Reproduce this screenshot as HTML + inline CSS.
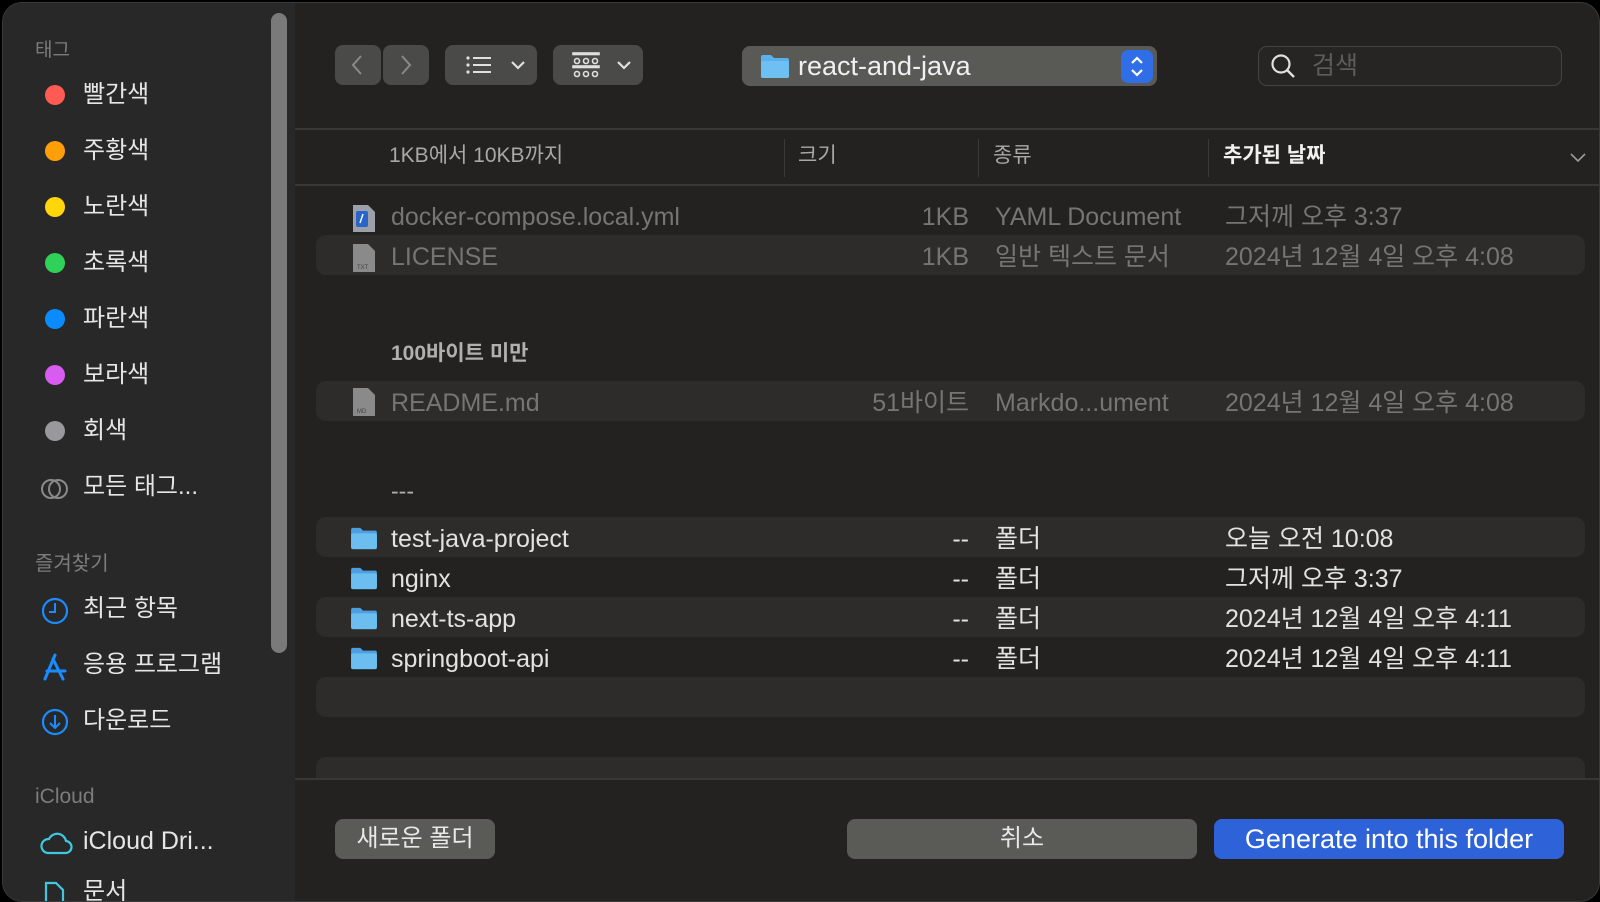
<!DOCTYPE html>
<html><head><meta charset="utf-8"><style>
*{margin:0;padding:0;box-sizing:border-box}
body{width:1600px;height:896px;background:#000;overflow:hidden;font-family:"Liberation Sans","Noto Sans CJK KR",sans-serif;position:relative}
.win{position:absolute;left:2px;top:2px;width:1598px;height:900px;background:#232220;border-radius:20px;overflow:hidden;border:1px solid #3a3a3a}
.side{position:absolute;left:0;top:0;width:292px;height:900px;background:#282828}
.abs{position:absolute;white-space:nowrap;line-height:28px}
.sl{color:#7c7c7c;font-size:20px}
.si{color:#e6e6e6;font-size:24px;left:80px}
.dot{position:absolute;left:42px;width:20px;height:20px;border-radius:50%}
.scroll{position:absolute;left:268px;top:10px;width:16px;height:640px;border-radius:8px;background:#7a7a7a}
.btn{position:absolute;background:#5a5a57;border-radius:8px}
.band{position:absolute;left:313px;width:1269px;height:40px;background:#2d2c2a;border-radius:10px}
.dim{color:#767573;font-size:25px}
.txt{color:#e2e2e2;font-size:25px}
.hd{color:#a8a8a8;font-size:21px}
.folder{position:absolute;left:346px;width:30px;height:24px}
</style></head><body>
<div class="win">
<div class="side">
<div class="abs sl" style="left:32px;top:34px;font-size:19px">태그</div>
<div class="dot" style="top:82px;background:#fe5b52"></div><div class="abs si" style="top:78px">빨간색</div>
<div class="dot" style="top:138px;background:#fe9f0a"></div><div class="abs si" style="top:134px">주황색</div>
<div class="dot" style="top:194px;background:#fed60a"></div><div class="abs si" style="top:190px">노란색</div>
<div class="dot" style="top:250px;background:#30d158"></div><div class="abs si" style="top:246px">초록색</div>
<div class="dot" style="top:306px;background:#0a8cff"></div><div class="abs si" style="top:302px">파란색</div>
<div class="dot" style="top:362px;background:#d85cf0"></div><div class="abs si" style="top:358px">보라색</div>
<div class="dot" style="top:418px;background:#98989d"></div><div class="abs si" style="top:414px">회색</div>
<svg class="abs" style="left:38px;top:474px" width="30" height="24"><circle cx="10" cy="12" r="9" fill="none" stroke="#8a8a8a" stroke-width="2"/><circle cx="17" cy="12" r="9" fill="none" stroke="#8a8a8a" stroke-width="2"/></svg>
<div class="abs si" style="top:470px">모든 태그...</div>
<div class="abs sl" style="left:32px;top:547px">즐겨찾기</div>
<svg class="abs" style="left:38px;top:594px" width="28" height="28"><circle cx="14" cy="14" r="12" fill="none" stroke="#1a8cff" stroke-width="2.2"/><path d="M14 6v9h-6" fill="none" stroke="#1a8cff" stroke-width="2"/></svg>
<div class="abs si" style="top:592px">최근 항목</div>
<svg class="abs" style="left:38px;top:650px" width="30" height="28"><path d="M14 2l-10 24M12 6l10 20M6 18h18" fill="none" stroke="#1a8cff" stroke-width="3" stroke-linecap="round"/></svg>
<div class="abs si" style="top:648px">응용 프로그램</div>
<svg class="abs" style="left:38px;top:705px" width="28" height="28"><circle cx="14" cy="14" r="12" fill="none" stroke="#1a8cff" stroke-width="2.2"/><path d="M14 7v13M9 15l5 5 5-5" fill="none" stroke="#1a8cff" stroke-width="2"/></svg>
<div class="abs si" style="top:704px">다운로드</div>
<div class="abs sl" style="left:32px;top:780px;font-size:21px">iCloud</div>
<svg class="abs" style="left:36px;top:826px" width="34" height="28"><path d="M9 24h17a6 6 0 0 0 1-12 9 9 0 0 0-17-2 7 7 0 0 0-1 14z" fill="none" stroke="#40c8e0" stroke-width="2.2"/></svg>
<div class="abs si" style="top:824px;font-size:25px">iCloud Dri...</div>
<svg class="abs" style="left:40px;top:878px" width="24" height="24"><path d="M3 2h10l7 7v15H3z" fill="none" stroke="#40c8e0" stroke-width="2.2"/></svg>
<div class="abs si" style="top:875px">문서</div>
<div class="scroll"></div>
</div>

<!-- toolbar -->
<div class="btn" style="left:332px;top:42px;width:46px;height:40px;background:#4a4a48"></div>
<div class="btn" style="left:380px;top:42px;width:46px;height:40px;background:#4a4a48"></div>
<svg class="abs" style="left:345px;top:50px" width="20" height="24"><path d="M13 3l-8 9 8 9" fill="none" stroke="#8a8a88" stroke-width="2"/></svg>
<svg class="abs" style="left:393px;top:50px" width="20" height="24"><path d="M6 3l8 9-8 9" fill="none" stroke="#8a8a88" stroke-width="2"/></svg>
<div class="btn" style="left:442px;top:42px;width:92px;height:40px;background:#4a4a48"></div>
<svg class="abs" style="left:462px;top:50px" width="30" height="24"><g fill="#e0e0e0"><circle cx="3" cy="5" r="1.6"/><circle cx="3" cy="12" r="1.6"/><circle cx="3" cy="19" r="1.6"/><rect x="8" y="4" width="18" height="2"/><rect x="8" y="11" width="18" height="2"/><rect x="8" y="18" width="18" height="2"/></g></svg>
<svg class="abs" style="left:507px;top:56px" width="16" height="12"><path d="M2 3l6 6 6-6" fill="none" stroke="#e0e0e0" stroke-width="2.2"/></svg>
<div class="btn" style="left:550px;top:42px;width:90px;height:40px;background:#4a4a48"></div>
<svg class="abs" style="left:568px;top:48px" width="30" height="30"><g fill="none" stroke="#e0e0e0" stroke-width="1.6"><rect x="2" y="2" width="26" height="1.5" fill="#e0e0e0"/><circle cx="6" cy="10" r="2.5"/><circle cx="15" cy="10" r="2.5"/><circle cx="24" cy="10" r="2.5"/><rect x="2" y="15" width="26" height="1.5" fill="#e0e0e0"/><circle cx="6" cy="23" r="2.5"/><circle cx="15" cy="23" r="2.5"/><circle cx="24" cy="23" r="2.5"/></g></svg>
<svg class="abs" style="left:613px;top:56px" width="16" height="12"><path d="M2 3l6 6 6-6" fill="none" stroke="#e0e0e0" stroke-width="2.2"/></svg>
<div class="btn" style="left:739px;top:43px;width:415px;height:40px;background:#595956"></div>
<svg class="abs" style="left:757px;top:50px" width="30" height="26"><path d="M1 4a2 2 0 0 1 2-2h8l3 3h13a2 2 0 0 1 2 2v16a2 2 0 0 1-2 2H3a2 2 0 0 1-2-2z" fill="#5ab0e8"/><rect x="1" y="8" width="28" height="17" rx="2" fill="#6fc0f2"/></svg>
<div class="abs" style="left:795px;top:49px;font-size:27px;color:#f0f0f0">react-and-java</div>
<div class="abs" style="left:1118px;top:47px;width:32px;height:33px;background:#2f6ee6;border-radius:7px"></div>
<svg class="abs" style="left:1124px;top:50px" width="20" height="28"><path d="M5 10l5-5 5 5M5 17l5 5 5-5" fill="none" stroke="#fff" stroke-width="2.2"/></svg>
<div class="abs" style="left:1255px;top:43px;width:304px;height:40px;border:1px solid #444;border-radius:9px;background:#262523"></div>
<svg class="abs" style="left:1267px;top:50px" width="28" height="28"><circle cx="11" cy="11" r="8.5" fill="none" stroke="#e0e0e0" stroke-width="2.2"/><path d="M17 17l7 7" stroke="#e0e0e0" stroke-width="2.4"/></svg>
<div class="abs" style="left:1309px;top:49px;font-size:25px;color:#5c5c5a">검색</div>

<!-- header -->
<div class="abs" style="left:292px;top:125px;width:1306px;height:2px;background:#383735"></div>
<div class="abs" style="left:292px;top:181px;width:1306px;height:2px;background:#383735"></div>
<div class="abs" style="left:781px;top:136px;width:1px;height:38px;background:#3a3937"></div>
<div class="abs" style="left:975px;top:136px;width:1px;height:38px;background:#3a3937"></div>
<div class="abs" style="left:1205px;top:136px;width:1px;height:38px;background:#3a3937"></div>
<div class="abs hd" style="left:386px;top:139px">1KB에서 10KB까지</div>
<div class="abs hd" style="left:795px;top:139px">크기</div>
<div class="abs hd" style="left:990px;top:139px">종류</div>
<div class="abs" style="left:1220px;top:139px;font-size:21px;color:#f0f0f0;font-weight:bold">추가된 날짜</div>
<svg class="abs" style="left:1566px;top:148px" width="18" height="12"><path d="M2 3l7 7 7-7" fill="none" stroke="#9a9a9a" stroke-width="1.6"/></svg>

<!-- rows -->
<div class="band" style="top:232px"></div>
<div class="band" style="top:378px"></div>
<div class="band" style="top:514px"></div>
<div class="band" style="top:594px"></div>
<div class="band" style="top:674px"></div>
<div class="band" style="top:754px"></div>

<svg class="abs" style="left:349px;top:200px" width="24" height="30"><path d="M1 2h15l7 7v20H1z" fill="#9ca0a8"/><rect x="4" y="8" width="12" height="16" rx="2" fill="#2a64c8"/><path d="M11 11l-3 9" stroke="#fff" stroke-width="1.4"/></svg>
<div class="abs dim" style="left:388px;top:200px">docker-compose.local.yml</div>
<div class="abs dim" style="left:880px;top:200px;width:86px;text-align:right">1KB</div>
<div class="abs dim" style="left:992px;top:200px">YAML Document</div>
<div class="abs dim" style="left:1222px;top:200px">그저께 오후 3:37</div>

<svg class="abs" style="left:349px;top:240px" width="24" height="30"><path d="M1 1h15l7 7v21H1z" fill="#8a8a8a"/><text x="5" y="26" font-size="6" fill="#444" font-family="Liberation Sans">TXT</text></svg>
<div class="abs dim" style="left:388px;top:240px">LICENSE</div>
<div class="abs dim" style="left:880px;top:240px;width:86px;text-align:right">1KB</div>
<div class="abs dim" style="left:992px;top:240px">일반 텍스트 문서</div>
<div class="abs dim" style="left:1222px;top:240px">2024년 12월 4일 오후 4:08</div>

<div class="abs" style="left:388px;top:337px;font-size:21px;color:#b0b0b0;font-weight:bold">100바이트 미만</div>

<svg class="abs" style="left:349px;top:384px" width="24" height="30"><path d="M1 1h15l7 7v21H1z" fill="#8a8a8a"/><text x="5" y="26" font-size="6" fill="#444" font-family="Liberation Sans">MD</text></svg>
<div class="abs dim" style="left:388px;top:386px">README.md</div>
<div class="abs dim" style="left:800px;top:386px;width:166px;text-align:right">51바이트</div>
<div class="abs dim" style="left:992px;top:386px">Markdo...ument</div>
<div class="abs dim" style="left:1222px;top:386px">2024년 12월 4일 오후 4:08</div>

<div class="abs" style="left:388px;top:474px;font-size:23px;color:#b0b0b0">---</div>

<svg class="folder" style="top:523px" viewBox="0 0 30 26"><path d="M1 4a2 2 0 0 1 2-2h8l3 3h13a2 2 0 0 1 2 2v16a2 2 0 0 1-2 2H3a2 2 0 0 1-2-2z" fill="#4e9fe0"/><rect x="1" y="8" width="28" height="17" rx="2" fill="#6cbdf0"/></svg>
<div class="abs txt" style="left:388px;top:522px">test-java-project</div>
<div class="abs txt" style="left:880px;top:522px;width:86px;text-align:right">--</div>
<div class="abs txt" style="left:992px;top:522px">폴더</div>
<div class="abs txt" style="left:1222px;top:522px">오늘 오전 10:08</div>

<svg class="folder" style="top:563px" viewBox="0 0 30 26"><path d="M1 4a2 2 0 0 1 2-2h8l3 3h13a2 2 0 0 1 2 2v16a2 2 0 0 1-2 2H3a2 2 0 0 1-2-2z" fill="#4e9fe0"/><rect x="1" y="8" width="28" height="17" rx="2" fill="#6cbdf0"/></svg>
<div class="abs txt" style="left:388px;top:562px">nginx</div>
<div class="abs txt" style="left:880px;top:562px;width:86px;text-align:right">--</div>
<div class="abs txt" style="left:992px;top:562px">폴더</div>
<div class="abs txt" style="left:1222px;top:562px">그저께 오후 3:37</div>

<svg class="folder" style="top:603px" viewBox="0 0 30 26"><path d="M1 4a2 2 0 0 1 2-2h8l3 3h13a2 2 0 0 1 2 2v16a2 2 0 0 1-2 2H3a2 2 0 0 1-2-2z" fill="#4e9fe0"/><rect x="1" y="8" width="28" height="17" rx="2" fill="#6cbdf0"/></svg>
<div class="abs txt" style="left:388px;top:602px">next-ts-app</div>
<div class="abs txt" style="left:880px;top:602px;width:86px;text-align:right">--</div>
<div class="abs txt" style="left:992px;top:602px">폴더</div>
<div class="abs txt" style="left:1222px;top:602px">2024년 12월 4일 오후 4:11</div>

<svg class="folder" style="top:643px" viewBox="0 0 30 26"><path d="M1 4a2 2 0 0 1 2-2h8l3 3h13a2 2 0 0 1 2 2v16a2 2 0 0 1-2 2H3a2 2 0 0 1-2-2z" fill="#4e9fe0"/><rect x="1" y="8" width="28" height="17" rx="2" fill="#6cbdf0"/></svg>
<div class="abs txt" style="left:388px;top:642px">springboot-api</div>
<div class="abs txt" style="left:880px;top:642px;width:86px;text-align:right">--</div>
<div class="abs txt" style="left:992px;top:642px">폴더</div>
<div class="abs txt" style="left:1222px;top:642px">2024년 12월 4일 오후 4:11</div>

<!-- footer -->
<div class="abs" style="left:292px;top:775px;width:1306px;height:125px;background:#232220;border-top:2px solid #383735"></div>
<div class="btn" style="left:332px;top:816px;width:160px;height:40px"></div>
<div class="abs" style="left:332px;top:822px;width:160px;text-align:center;font-size:24px;color:#e8e8e8">새로운 폴더</div>
<div class="btn" style="left:844px;top:816px;width:350px;height:40px"></div>
<div class="abs" style="left:844px;top:822px;width:350px;text-align:center;font-size:24px;color:#e8e8e8">취소</div>
<div class="btn" style="left:1211px;top:816px;width:350px;height:40px;background:#2d62d8"></div>
<div class="abs" style="left:1211px;top:822px;width:350px;text-align:center;font-size:27px;color:#fff">Generate into this folder</div>
</div>
</body></html>
